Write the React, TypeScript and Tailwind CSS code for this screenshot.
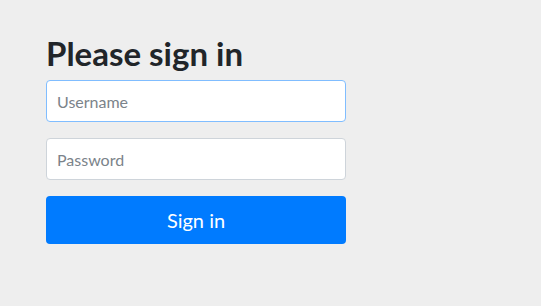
export default function App() {
  return (
    <div className="min-h-[306px] w-full bg-[#eeeeee] font-['Lato',sans-serif]">
      <form className="ml-[46px] flex w-[300px] flex-col pt-[34px]">
        <h2 className="mb-[8px] text-[33px] font-bold leading-[38px] text-[#212529]">
          Please sign in
        </h2>
        <input
          type="text"
          placeholder="Username"
          className="mb-[16px] h-[42px] rounded-[4px] border border-[#80bdff] bg-white px-[10px] text-[16px] text-[#495057] outline-none placeholder:text-[#7b838a]"
        />
        <input
          type="password"
          placeholder="Password"
          className="mb-[16px] h-[42px] rounded-[4px] border border-[#ced4da] bg-white px-[10px] text-[16px] text-[#495057] outline-none placeholder:text-[#7b838a]"
        />
        <button
          type="button"
          className="h-[48px] rounded-[4px] bg-[#007bff] text-[20px] text-white"
        >
          Sign in
        </button>
      </form>
    </div>
  );
}
